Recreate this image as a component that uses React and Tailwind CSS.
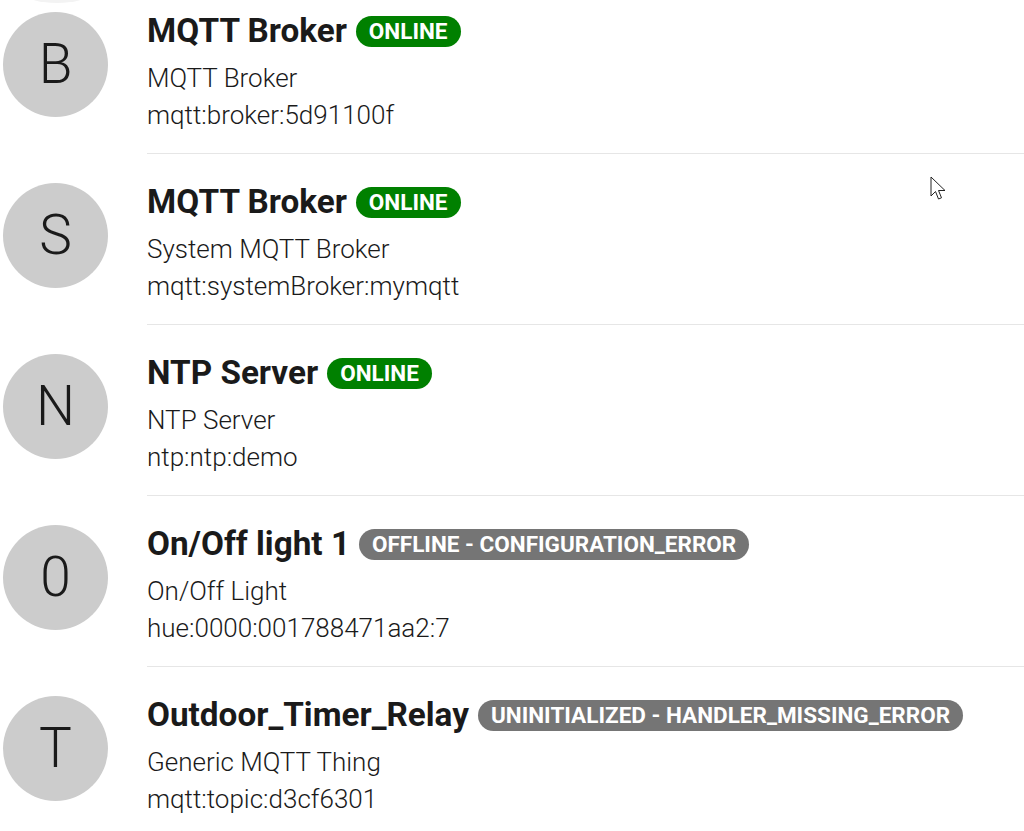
import React from "react";

const items = [
  { letter: "B", title: "MQTT Broker", status: "ONLINE", online: true, label: "MQTT Broker", uid: "mqtt:broker:5d91100f" },
  { letter: "S", title: "MQTT Broker", status: "ONLINE", online: true, label: "System MQTT Broker", uid: "mqtt:systemBroker:mymqtt" },
  { letter: "N", title: "NTP Server", status: "ONLINE", online: true, label: "NTP Server", uid: "ntp:ntp:demo" },
  { letter: "0", title: "On/Off light 1", status: "OFFLINE - CONFIGURATION_ERROR", online: false, label: "On/Off Light", uid: "hue:0000:001788471aa2:7" },
  { letter: "T", title: "Outdoor_Timer_Relay", status: "UNINITIALIZED - HANDLER_MISSING_ERROR", online: false, label: "Generic MQTT Thing", uid: "mqtt:topic:d3cf6301" },
];

function Row({ item }) {
  return (
    <div className="flex">
      <div className="w-[147px] shrink-0 pl-[3px] pt-[29.5px]">
        <div className="w-[105px] h-[105px] rounded-full bg-[#cccccc] flex items-center justify-center text-[55px] font-light text-[#1a1a1a] leading-none">
          {item.letter}
        </div>
      </div>
      <div className="flex-1 border-b border-[#e6e6e6] pt-[28px] pb-[18.5px]">
        <div className="flex items-center gap-[9px] h-[40px]">
          <span className="text-[33.3px] font-bold text-[#1a1a1a] leading-[40px] whitespace-nowrap">{item.title}</span>
          <span
            className={
              "h-[31px] mt-[1px] px-[13px] rounded-full text-white font-bold text-[22.5px] leading-[31px] whitespace-nowrap " +
              (item.online ? "bg-[#008000]" : "bg-[#757575]")
            }
          >
            {item.status}
          </span>
        </div>
        <div className="mt-[9.5px] text-[26px] font-light text-[#1a1a1a] leading-[37px]">{item.label}</div>
        <div className="text-[26px] font-light text-[#1a1a1a] leading-[37px]">{item.uid}</div>
      </div>
    </div>
  );
}

export default function App() {
  return (
    <div className="relative w-[1024px] h-[831px] overflow-hidden bg-white" style={{ fontFamily: "Roboto, 'Noto Sans', sans-serif" }}>
      <div className="absolute left-[22px] top-[-20px] w-[70px] h-[23px] rounded-[50%] bg-[#f3f3f3]" />
      <div className="mt-[-17.5px]">
        {items.map((it, i) => (
          <Row key={i} item={it} />
        ))}
      </div>
      <svg className="absolute left-[930px] top-[176px]" width="18" height="26" viewBox="0 0 18 26">
        <path d="M1 1 L1 20 L5.5 15.5 L8.5 23 L11.5 21.8 L8.5 14.5 L15 14.5 Z" fill="white" stroke="#222" strokeWidth="1" strokeLinejoin="miter" />
      </svg>
    </div>
  );
}
